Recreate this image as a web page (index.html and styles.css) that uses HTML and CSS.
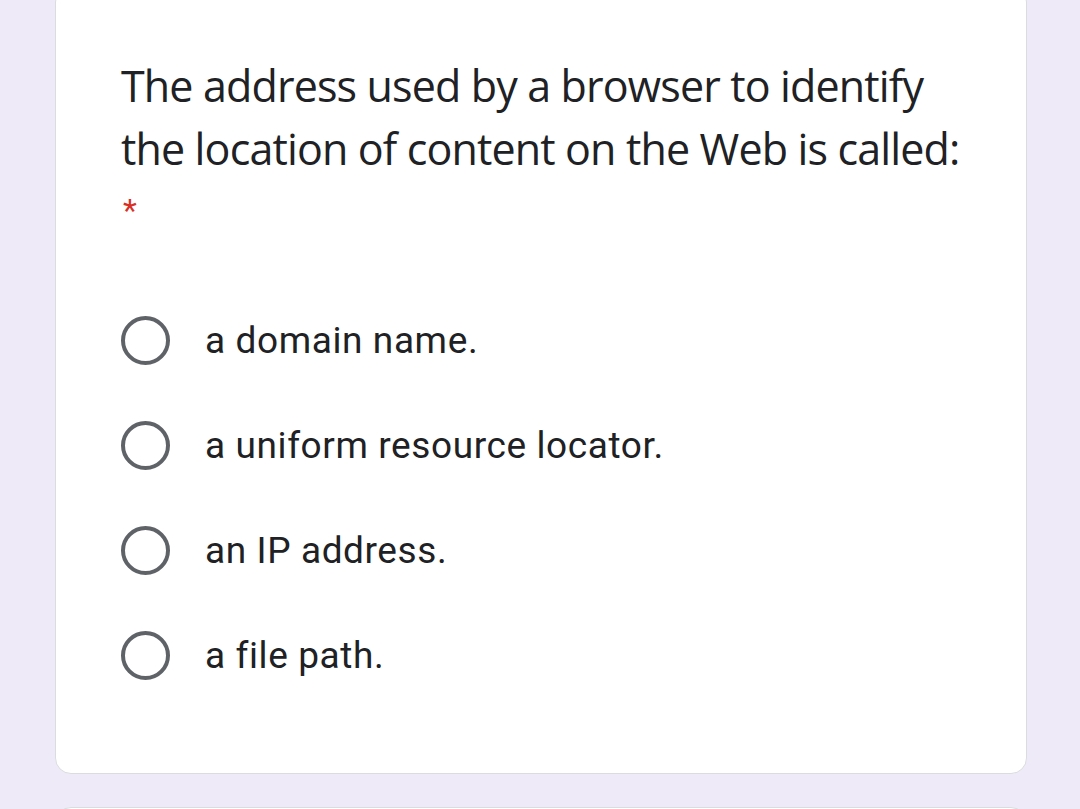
FILE: index.html
```html
<!DOCTYPE html>
<html lang="en">
<head>
  <meta charset="UTF-8" />
  <title>Question</title>
  <link rel="stylesheet" href="styles.css">
</head>
<body>

<div class="form">
  <div class="card">
    <div class="question">The address used by a browser to identify the location of content on the Web is called:</div>
    <div class="required">*</div>

    <div class="options">
      <label class="option"><span class="radio"></span><span class="option-text">a domain name.</span></label>
      <label class="option"><span class="radio"></span><span class="option-text">a uniform resource locator.</span></label>
      <label class="option"><span class="radio"></span><span class="option-text">an IP address.</span></label>
      <label class="option"><span class="radio"></span><span class="option-text">a file path.</span></label>
    </div>
  </div>

  <div class="card next"></div>
</div>

</body>
</html>
```

FILE: styles.css
```css
body {
  margin: 0;
  background-color: #eeeaf8;
  font-family: Roboto, "Liberation Sans", sans-serif;
  color: #202124;
  overflow: hidden;
}

.form {
  width: 972px;
  margin: -14px 0 0 55px;
  display: flex;
  flex-direction: column;
  gap: 33px;
}

.card {
  background-color: #ffffff;
  border: 1px solid #dadce0;
  border-radius: 16px;
  padding: 67px 60px 94px 65px;
}

.card.next {
  height: 200px;
  padding: 0;
}

.question {
  font-family: "Open Sans", sans-serif;
  font-size: 43px;
  line-height: 63px;
  letter-spacing: -0.85px;
}

.required {
  color: #d93025;
  font-size: 32px;
  line-height: 30px;
  margin: 15px 0 0 2px;
}

.options {
  display: flex;
  flex-direction: column;
  gap: 57px;
  margin-top: 91px;
}

.option {
  display: flex;
  align-items: center;
  gap: 35px;
  height: 48px;
}

.radio {
  width: 41px;
  height: 41px;
  border: 4.5px solid #5f6368;
  border-radius: 50%;
  flex-shrink: 0;
}

.option-text {
  font-size: 37px;
  line-height: 48px;
  letter-spacing: 0.6px;
  margin-top: 2px;
}
```
